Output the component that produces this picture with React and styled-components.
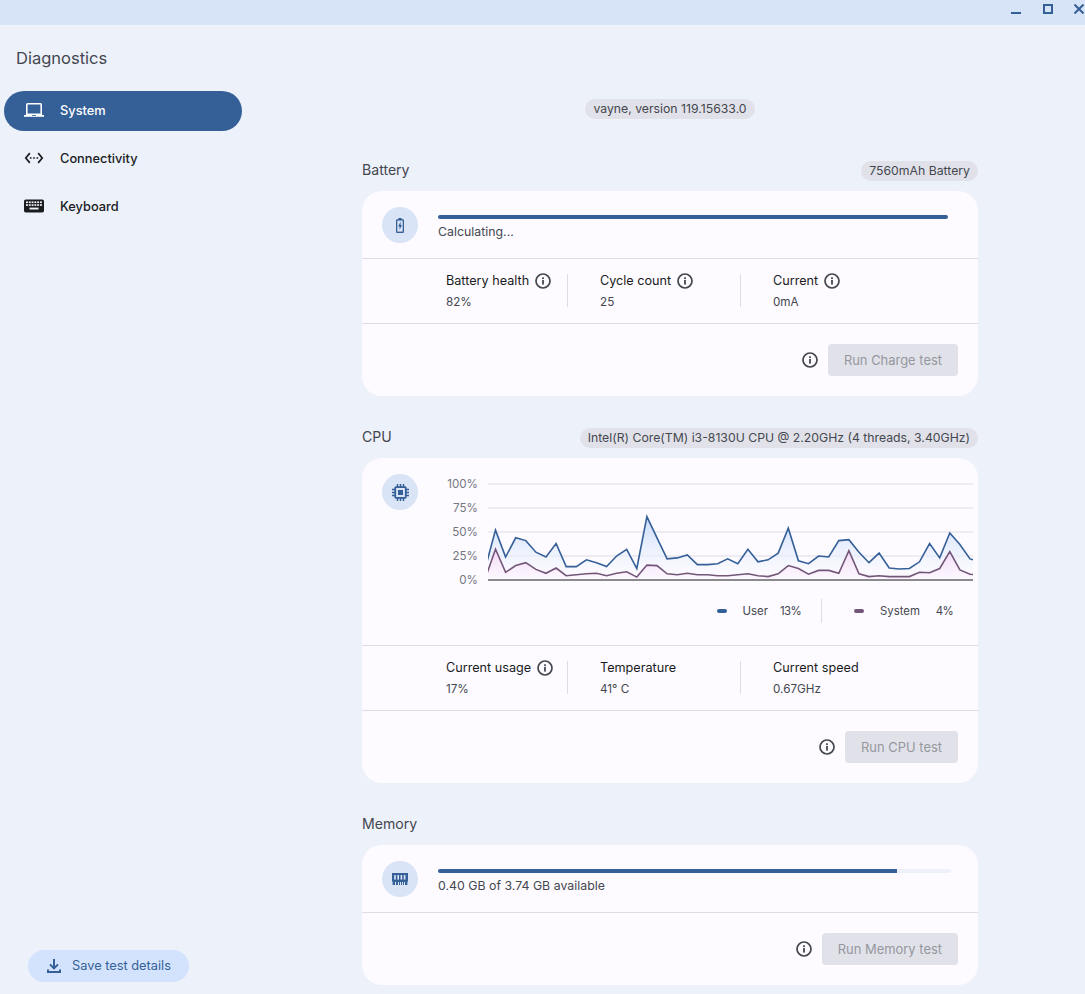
import React from 'react';
import styled, { createGlobalStyle } from 'styled-components';
import { MdSettingsEthernet } from 'react-icons/md';

const GlobalStyle = createGlobalStyle`
  html, body {
    margin: 0;
    padding: 0;
    height: 100%;
    overflow: hidden;
    background: #edf1fa;
    font-family: Inter, "Liberation Sans", sans-serif;
  }
`;

const USER = [13, 52, 24, 44, 41, 29, 24, 38, 14, 14, 21, 18, 14, 25, 32, 12, 66, 44, 22, 23, 26, 16, 16, 17, 22, 17, 32, 19, 21, 28, 54, 20, 17, 25, 24, 41, 42, 29, 18, 28, 12.5, 11.5, 12, 19, 38, 23, 49, 37, 22, 19];
const SYSTEM = [2, 32, 8, 15, 18, 11, 7, 12.5, 4.5, 5.5, 6.5, 7, 4.5, 7, 8.5, 3, 15.5, 15, 6.5, 5.5, 7, 5.5, 5.5, 4.5, 4.5, 5.5, 6.5, 4.5, 3.5, 6.5, 15, 12, 6, 10, 10, 7, 30.5, 6.5, 3.5, 4.5, 3.5, 3.5, 3.5, 8, 7.5, 12, 29.5, 10.5, 6, 5];

// plot is 485 wide, 96 tall; first sample sits left of the clip edge
const toPoints = (data) =>
  data.map((v, i) => `${(-2.6 + i * 10.096).toFixed(1)},${(96 - v * 0.96).toFixed(1)}`).join(' ');

const TICKS = ['100%', '75%', '50%', '25%', '0%'];

const LaptopIcon = () => (
  <svg width="20" height="20" viewBox="0 0 20 20" fill="currentColor">
    <path d="M3.5 3h13A1.5 1.5 0 0 1 18 4.5V15H2V4.5A1.5 1.5 0 0 1 3.5 3zm.1 1.6v8.8h12.8V4.6H3.6z" fillRule="evenodd" />
    <rect x="0" y="15" width="20" height="1.8" />
    <rect x="8" y="15.1" width="4" height="0.8" fill="#355f97" />
  </svg>
);

const KeyboardIcon = () => (
  <svg width="20" height="20" viewBox="0 0 20 20">
    <rect x="0" y="3.5" width="20" height="13" rx="1.8" fill="currentColor" />
    <g fill="#edf1fa">
      <rect x="2" y="5.4" width="1.9" height="1.7" /><rect x="4.8" y="5.4" width="1.9" height="1.7" /><rect x="7.6" y="5.4" width="1.9" height="1.7" /><rect x="10.4" y="5.4" width="1.9" height="1.7" /><rect x="13.2" y="5.4" width="1.9" height="1.7" /><rect x="16" y="5.4" width="1.9" height="1.7" />
      <rect x="2" y="8.2" width="1.9" height="1.7" /><rect x="4.8" y="8.2" width="1.9" height="1.7" /><rect x="7.6" y="8.2" width="1.9" height="1.7" /><rect x="10.4" y="8.2" width="1.9" height="1.7" /><rect x="13.2" y="8.2" width="1.9" height="1.7" /><rect x="16" y="8.2" width="1.9" height="1.7" />
      <rect x="5.5" y="11.6" width="9" height="1.9" />
    </g>
  </svg>
);

const InfoIcon = () => (
  <svg width="16" height="16" viewBox="0 0 16 16" fill="none">
    <circle cx="8" cy="8" r="7" stroke="#44474f" strokeWidth="1.7" />
    <rect x="7.1" y="7" width="1.8" height="4.6" fill="#44474f" />
    <rect x="7.1" y="4.3" width="1.8" height="1.8" fill="#44474f" />
  </svg>
);

const BatteryIcon = () => (
  <svg width="8" height="15" viewBox="0 0 8 15">
    <path d="M2.4 0h3.2v1.2h1.2A1.2 1.2 0 0 1 8 2.4v11.4A1.2 1.2 0 0 1 6.8 15H1.2A1.2 1.2 0 0 1 0 13.8V2.4a1.2 1.2 0 0 1 1.2-1.2h1.2V0z" fill="#355f97" />
    <rect x="1.3" y="2.6" width="5.4" height="11" fill="#d9e4f7" />
    <path d="M4.6 3.6 2.2 8.4h1.4v3.4L6 7H4.6z" fill="#355f97" />
  </svg>
);

const CpuIcon = () => (
  <svg width="17" height="17" viewBox="0 0 17 17" fill="none" stroke="#355f97">
    <rect x="3.2" y="3.2" width="10.6" height="10.6" rx="0.8" strokeWidth="1.8" />
    <rect x="6" y="6" width="5" height="5" fill="#355f97" strokeWidth="0" />
    <path d="M5.5 0v3M8.5 0v3M11.5 0v3M5.5 14v3M8.5 14v3M11.5 14v3M0 5.5h3M0 8.5h3M0 11.5h3M14 5.5h3M14 8.5h3M14 11.5h3" strokeWidth="1.5" />
  </svg>
);

const MemoryIcon = () => (
  <svg width="16" height="12" viewBox="0 0 16 12">
    <path d="M0 0h16v8.4h-.6V12H.6V8.4H0V0z" fill="#355f97" />
    <g fill="#d9e4f7">
      <rect x="2.2" y="2" width="1.6" height="4.6" /><rect x="5.4" y="2" width="1.6" height="4.6" /><rect x="8.6" y="2" width="1.6" height="4.6" /><rect x="11.8" y="2" width="1.6" height="4.6" />
      <rect x="3" y="9" width="1" height="3" /><rect x="6" y="9" width="1" height="3" /><rect x="8" y="9" width="1" height="3" /><rect x="10" y="9" width="1" height="3" /><rect x="12" y="9" width="1" height="3" />
    </g>
  </svg>
);

const DownloadIcon = () => (
  <svg width="18" height="18" viewBox="0 0 18 18" fill="none" stroke="#355f97" strokeWidth="2">
    <path d="M9 2v9M5 7.4 9 11.4l4-4" />
    <path d="M3 12.5V15h12v-2.5" />
  </svg>
);

const Stat = ({ label, value, info }) => (
  <StatCell>
    <StatLabel>
      {label}
      {info && <InfoIcon />}
    </StatLabel>
    <StatValue>{value}</StatValue>
  </StatCell>
);

const CpuChart = () => (
  <ChartWrap>
    <svg width="560" height="116" viewBox="-70 -8 560 116">
      <defs>
        <linearGradient id="userFill" x1="0" y1="0" x2="0" y2="1">
          <stop offset="0" stopColor="#c9dcfb" />
          <stop offset="1" stopColor="#fdfbff" stopOpacity="0.4" />
        </linearGradient>
        <linearGradient id="systemFill" x1="0" y1="0" x2="0" y2="1">
          <stop offset="0" stopColor="#f5d9f6" />
          <stop offset="1" stopColor="#fdf4fe" stopOpacity="0.5" />
        </linearGradient>
        <clipPath id="plotClip">
          <rect x="0" y="-4" width="485" height="102" />
        </clipPath>
      </defs>
      {TICKS.map((t, i) => (
        <g key={t}>
          <text x="-10" y={i * 24 + 4.2} textAnchor="end" fontSize="11.6" fill="#74777f" fontFamily="Inter, sans-serif">{t}</text>
          {i < 4 && <line x1="0" x2="485" y1={i * 24} y2={i * 24} stroke="#dcdde4" strokeWidth="1" />}
        </g>
      ))}
      <g clipPath="url(#plotClip)">
        <polygon points={`-3,96 ${toPoints(USER)} 490,96`} fill="url(#userFill)" />
        <polygon points={`-3,96 ${toPoints(SYSTEM)} 490,96`} fill="url(#systemFill)" />
        <polyline points={toPoints(USER)} fill="none" stroke="#355f97" strokeWidth="1.6" />
        <polyline points={toPoints(SYSTEM)} fill="none" stroke="#735678" strokeWidth="1.6" />
      </g>
      <line x1="0" x2="485" y1="96" y2="96" stroke="#1a1c1e" strokeWidth="1.2" />
    </svg>
    <Legend>
      <LegendItem>
        <LegendDot $color="#355f97" />
        <LegendLabel>User</LegendLabel>
        <LegendValue>13%</LegendValue>
      </LegendItem>
      <LegendSep />
      <LegendItem>
        <LegendDot $color="#735678" />
        <LegendLabel>System</LegendLabel>
        <LegendValue>4%</LegendValue>
      </LegendItem>
    </Legend>
  </ChartWrap>
);

export default function App() {
  return (
    <Page>
      <GlobalStyle />
      <TitleBar>
        <WinMin />
        <WinMax />
        <WinClose>
          <svg width="10" height="10" viewBox="0 0 10 10" stroke="#355f97" strokeWidth="2">
            <path d="M0.5 0.5 9.5 9.5M9.5 0.5 0.5 9.5" />
          </svg>
        </WinClose>
      </TitleBar>
      <Body>
        <Sidebar>
          <AppTitle>Diagnostics</AppTitle>
          <NavItem $active>
            <LaptopIcon />
            System
          </NavItem>
          <NavItem>
            <MdSettingsEthernet size={20} />
            Connectivity
          </NavItem>
          <NavItem>
            <KeyboardIcon />
            Keyboard
          </NavItem>
          <SaveButton>
            <DownloadIcon />
            Save test details
          </SaveButton>
        </Sidebar>
        <Main>
          <VersionRow>
            <Chip>vayne, version 119.15633.0</Chip>
          </VersionRow>

          <SectionHead>
            <SectionTitle>Battery</SectionTitle>
            <Chip>7560mAh Battery</Chip>
          </SectionHead>
          <Card>
            <TopRow>
              <IconCircle><BatteryIcon /></IconCircle>
              <ProgressBlock $width={510}>
                <Track><Fill style={{ width: '100%' }} /></Track>
                <ProgressText>Calculating...</ProgressText>
              </ProgressBlock>
            </TopRow>
            <StatRow>
              <Stat label="Battery health" value="82%" info />
              <Stat label="Cycle count" value="25" info />
              <Stat label="Current" value="0mA" info />
            </StatRow>
            <ActionRow>
              <InfoIcon />
              <RunButton>Run Charge test</RunButton>
            </ActionRow>
          </Card>

          <SectionHead>
            <SectionTitle>CPU</SectionTitle>
            <Chip>Intel(R) Core(TM) i3-8130U CPU @ 2.20GHz (4 threads, 3.40GHz)</Chip>
          </SectionHead>
          <Card>
            <ChartRow>
              <IconCircle><CpuIcon /></IconCircle>
              <CpuChart />
            </ChartRow>
            <StatRow>
              <Stat label="Current usage" value="17%" info />
              <Stat label="Temperature" value="41° C" />
              <Stat label="Current speed" value="0.67GHz" />
            </StatRow>
            <ActionRow>
              <InfoIcon />
              <RunButton>Run CPU test</RunButton>
            </ActionRow>
          </Card>

          <SectionHead>
            <SectionTitle>Memory</SectionTitle>
          </SectionHead>
          <Card>
            <TopRow>
              <IconCircle><MemoryIcon /></IconCircle>
              <ProgressBlock $width={513}>
                <Track><Fill style={{ width: '89.5%' }} /></Track>
                <ProgressText>0.40 GB of 3.74 GB available</ProgressText>
              </ProgressBlock>
            </TopRow>
            <ActionRow>
              <InfoIcon />
              <RunButton>Run Memory test</RunButton>
            </ActionRow>
          </Card>
        </Main>
      </Body>
    </Page>
  );
}

const Page = styled.div`
  display: flex;
  flex-direction: column;
  width: 1085px;
  height: 994px;
  overflow: hidden;
`;

const TitleBar = styled.header`
  flex: 0 0 25px;
  height: 25px;
  background: #d7e3f7;
  display: flex;
  align-items: flex-start;
  justify-content: flex-end;
`;

const WinMin = styled.span`
  width: 10px;
  height: 2px;
  background: #355f97;
  margin: 12px 0 0 0;
`;

const WinMax = styled.span`
  box-sizing: border-box;
  width: 10px;
  height: 10px;
  border: 2px solid #355f97;
  margin: 4px 0 0 22px;
`;

const WinClose = styled.span`
  display: flex;
  margin: 4px 1px 0 21px;
`;

const Body = styled.div`
  flex: 1;
  display: flex;
  min-height: 0;
`;

const Sidebar = styled.nav`
  flex: 0 0 362px;
  display: flex;
  flex-direction: column;
  align-items: flex-start;
  padding-left: 4px;
  box-sizing: border-box;
`;

const AppTitle = styled.h1`
  margin: 23px 0 23px 12px;
  font-size: 16.5px;
  line-height: 20px;
  font-weight: 400;
  color: #44474f;
`;

const NavItem = styled.a`
  box-sizing: border-box;
  width: 238px;
  height: 40px;
  margin-bottom: 8px;
  padding: 0 0 2px 20px;
  display: flex;
  align-items: center;
  gap: 16px;
  border-radius: 20px;
  font-size: 12.8px;
  font-weight: 500;
  color: ${(p) => (p.$active ? '#ffffff' : '#1a1c1e')};
  background: ${(p) => (p.$active ? '#355f97' : 'transparent')};
`;

const SaveButton = styled.button`
  margin: auto 0 12px 24px;
  width: 161px;
  height: 32px;
  padding: 0 0 1px 17px;
  display: flex;
  align-items: center;
  gap: 9px;
  border: 0;
  border-radius: 16px;
  background: #d3e3fd;
  color: #355f97;
  font-family: inherit;
  font-size: 12.8px;
  font-weight: 400;
`;

const Main = styled.main`
  flex: 0 0 616px;
`;

const VersionRow = styled.div`
  display: flex;
  justify-content: center;
  margin: 74px 0 41px;
`;

const Chip = styled.span`
  display: inline-block;
  height: 20px;
  line-height: 19px;
  padding: 0 8px;
  border-radius: 10px;
  background: #e1e2e9;
  color: #44474f;
  font-size: 12.25px;
  white-space: nowrap;
`;

const SectionHead = styled.div`
  height: 21px;
  margin-bottom: 10px;
  display: flex;
  align-items: center;
  justify-content: space-between;
`;

const SectionTitle = styled.h2`
  margin: 0 0 2px;
  font-size: 14.1px;
  font-weight: 400;
  color: #44474f;
`;

const Card = styled.section`
  background: #fdfbff;
  border-radius: 20px;
  margin-bottom: 31px;
`;

const TopRow = styled.div`
  height: 67px;
  box-sizing: border-box;
  padding: 16px 0 0 20px;
  display: flex;
  gap: 20px;
`;

const ChartRow = styled.div`
  height: 187px;
  box-sizing: border-box;
  padding: 16px 0 0 20px;
  display: flex;
`;

const IconCircle = styled.div`
  flex: 0 0 36px;
  height: 36px;
  border-radius: 50%;
  background: #d9e4f7;
  display: flex;
  align-items: center;
  justify-content: center;
`;

const ProgressBlock = styled.div`
  width: ${(p) => p.$width}px;
  padding-top: 8px;
`;

const Track = styled.div`
  height: 4px;
  border-radius: 2px;
  background: #edf1fa;
  overflow: hidden;
`;

const Fill = styled.div`
  height: 100%;
  background: #355f97;
`;

const ProgressText = styled.div`
  margin-top: 4px;
  font-size: 12.35px;
  line-height: 18px;
  color: #44474f;
`;

const ChartWrap = styled.div`
  margin-top: 2px;
  display: flex;
  flex-direction: column;
`;

const Legend = styled.div`
  display: flex;
  align-items: center;
  justify-content: flex-end;
  height: 24px;
  margin-top: 7px;
  padding-right: 25px;
  font-size: 11.4px;
  color: #44474f;
`;

const LegendItem = styled.div`
  display: flex;
  align-items: center;
  gap: 16px;
`;

const LegendLabel = styled.span`
  margin-right: -4px;
`;

const LegendDot = styled.i`
  width: 10px;
  height: 4px;
  border-radius: 2px;
  background: ${(p) => p.$color};
`;

const LegendValue = styled.span`
  min-width: 21px;
  text-align: right;
  letter-spacing: -0.6px;
`;

const LegendSep = styled.div`
  width: 1px;
  height: 24px;
  margin: 0 32px 0 20px;
  background: #dcdde4;
`;

const StatRow = styled.div`
  height: 65px;
  box-sizing: border-box;
  padding: 15px 0 0 84px;
  display: grid;
  grid-template-columns: 154px 173px 1fr;
  border-top: 1px solid #dcdde4;
`;

const StatCell = styled.div`
  height: 33px;
  position: relative;
  &:not(:last-child)::after {
    content: '';
    position: absolute;
    right: 32px;
    top: 0;
    bottom: 0;
    width: 1px;
    background: #dcdde4;
  }
`;

const StatLabel = styled.div`
  display: flex;
  align-items: center;
  gap: 6px;
  height: 14px;
  font-size: 12.65px;
  line-height: 14px;
  color: #1a1c1e;
`;

const StatValue = styled.div`
  margin-top: 7px;
  font-size: 11.7px;
  line-height: 15px;
  color: #44474f;
`;

const ActionRow = styled.div`
  height: 73px;
  box-sizing: border-box;
  padding: 0 20px 0 0;
  display: flex;
  align-items: center;
  justify-content: flex-end;
  gap: 10px;
  border-top: 1px solid #dcdde4;
`;

const RunButton = styled.button`
  height: 32px;
  padding: 0 16px;
  border: 0;
  border-radius: 4px;
  background: #e1e2e9;
  color: #95979f;
  font-family: inherit;
  font-size: 12.95px;
  font-weight: 400;
`;
